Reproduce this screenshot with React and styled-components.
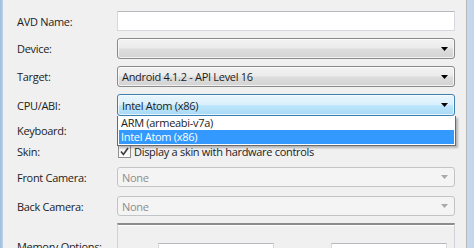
import styled, { createGlobalStyle } from "styled-components";

const Global = createGlobalStyle`
  html, body {
    margin: 0;
    padding: 0;
    background: #f0f0f0;
  }
  body {
    font-family: "Open Sans", "Noto Sans", sans-serif;
    font-size: 11px;
    letter-spacing: -0.3px;
    color: #1c1c1c;
  }
`;

const Arrow = ({ color = "#000" }) => (
  <svg width="7" height="4" viewBox="0 0 7 4">
    <path d="M0 0 H7 L3.5 4 Z" fill={color} />
  </svg>
);

const CheckMark = () => (
  <svg width="9" height="9" viewBox="0 0 9 9">
    <path
      d="M1 4.6 L3.4 7.4 L8 1"
      fill="none"
      stroke="#3b3b3b"
      strokeWidth="1.6"
    />
  </svg>
);

const App = () => {
  return (
    <Window>
      <Global />
      <FrameLeft />
      <Content>
        <Row $h={20} $mt={0}>
          <Label>AVD Name:</Label>
          <TextField />
        </Row>
        <Row $h={21} $mt={7}>
          <Label>Device:</Label>
          <Combo>
            <span></span>
            <Arrow />
          </Combo>
        </Row>
        <Row $h={21} $mt={7}>
          <Label>Target:</Label>
          <Combo>
            <span>Android 4.1.2 - API Level 16</span>
            <Arrow />
          </Combo>
        </Row>
        <Row $h={22} $mt={7}>
          <Label>CPU/ABI:</Label>
          <ComboWrap>
            <Combo $focused>
              <span>Intel Atom (x86)</span>
              <Arrow />
            </Combo>
            <DropList>
              <Option>ARM (armeabi-v7a)</Option>
              <Option $selected>Intel Atom (x86)</Option>
            </DropList>
          </ComboWrap>
        </Row>
        <Row $h={20} $mt={4}>
          <Label>Keyboard:</Label>
        </Row>
        <Row $h={20} $mt={1}>
          <Label>Skin:</Label>
          <CheckRow>
            <CheckBox>
              <CheckMark />
            </CheckBox>
            <span>Display a skin with hardware controls</span>
          </CheckRow>
        </Row>
        <Row $h={20} $mt={6}>
          <Label>Front Camera:</Label>
          <Combo $disabled>
            <span>None</span>
            <Arrow color="#a9a9a9" />
          </Combo>
        </Row>
        <Row $h={20} $mt={9}>
          <Label>Back Camera:</Label>
          <Combo $disabled>
            <span>None</span>
            <Arrow color="#a9a9a9" />
          </Combo>
        </Row>
        <GroupRow>
          <Label $top>Memory Options:</Label>
          <Group>
            <TextField $w={116} />
            <TextField $w={116} />
          </Group>
        </GroupRow>
      </Content>
      <FrameRight />
    </Window>
  );
};

const Window = styled.div`
  display: flex;
  width: 474px;
  height: 248px;
  overflow: hidden;
`;

const FrameLeft = styled.div`
  width: 3px;
  background: linear-gradient(90deg, #9fbbdb, #bcd2ea);
`;

const FrameRight = styled.div`
  width: 7px;
  background: #c4d7ec;
  border-left: 1px solid #b8b8b8;
`;

const Content = styled.div`
  flex: 1;
  display: flex;
  flex-direction: column;
  padding: 11px 0 0 14px;
  overflow: hidden;
  background: #f0f0f0;
`;

const Row = styled.div`
  display: flex;
  flex-shrink: 0;
  align-items: center;
  height: ${(p) => p.$h}px;
  margin-top: ${(p) => p.$mt}px;
`;

const Label = styled.div`
  width: 100px;
  flex-shrink: 0;
  line-height: 15px;
  white-space: nowrap;
  align-self: ${(p) => (p.$top ? "flex-start" : "center")};
  padding-top: ${(p) => (p.$top ? "16px" : "0")};
`;

const TextField = styled.div`
  box-sizing: border-box;
  flex-shrink: 0;
  width: ${(p) => (p.$w ? `${p.$w}px` : "338px")};
  height: 20px;
  background: #fff;
  border: 1px solid #d6d8de;
  border-top-color: #b7b9bf;
`;

const Combo = styled.div`
  box-sizing: border-box;
  width: 338px;
  height: 100%;
  display: flex;
  align-items: center;
  justify-content: space-between;
  padding: 0 6px 0 4px;
  border-radius: 3px;
  border: 1px solid
    ${(p) => (p.$focused ? "#3c7fb1" : p.$disabled ? "#c2c5c8" : "#8a8a8a")};
  background: ${(p) =>
    p.$focused
      ? "linear-gradient(#eaf6fd 0%, #d9f0fc 48%, #bee6fd 52%, #a7d9f5 100%)"
      : p.$disabled
      ? "#f4f4f4"
      : "linear-gradient(#f3f3f3 0%, #ebebeb 48%, #dddddd 52%, #d3d3d3 100%)"};
  box-shadow: inset 0 0 0 1px
    ${(p) => (p.$disabled ? "transparent" : "rgba(255, 255, 255, 0.7)")};
  color: ${(p) => (p.$disabled ? "#8d8d8d" : "#1c1c1c")};
  line-height: 15px;
`;

const ComboWrap = styled.div`
  position: relative;
  height: 100%;
`;

const DropList = styled.div`
  position: absolute;
  top: 100%;
  left: 0;
  z-index: 2;
  box-sizing: border-box;
  width: 339px;
  padding: 0 1px 1px;
  background: #fff;
  border: 1px solid #6a6a6a;
  border-top: none;
  box-shadow: 2px 2px 2px rgba(0, 0, 0, 0.25);
`;

const Option = styled.div`
  height: 14px;
  line-height: 14px;
  padding-left: 2px;
  background: ${(p) => (p.$selected ? "#3399ff" : "transparent")};
  color: ${(p) => (p.$selected ? "#fff" : "#1c1c1c")};
`;

const CheckRow = styled.div`
  display: flex;
  align-items: center;
  gap: 3px;
  padding-left: 1px;
  line-height: 15px;
`;

const CheckBox = styled.div`
  box-sizing: border-box;
  width: 13px;
  height: 13px;
  display: flex;
  align-items: center;
  justify-content: center;
  border: 1px solid #8f8f8f;
  background: linear-gradient(#f0f0f0, #fdfdfd);
`;

const GroupRow = styled.div`
  display: flex;
  flex-shrink: 0;
  margin-top: 7px;
`;

const Group = styled.div`
  box-sizing: border-box;
  width: 338px;
  height: 60px;
  display: flex;
  justify-content: space-between;
  padding: 18px 7px 0 40px;
  border: 1px solid #d0d4d8;
  border-top: 2px solid #8c8c8c;
  box-shadow: inset 0 1px 0 #fff;
`;

export default App;
